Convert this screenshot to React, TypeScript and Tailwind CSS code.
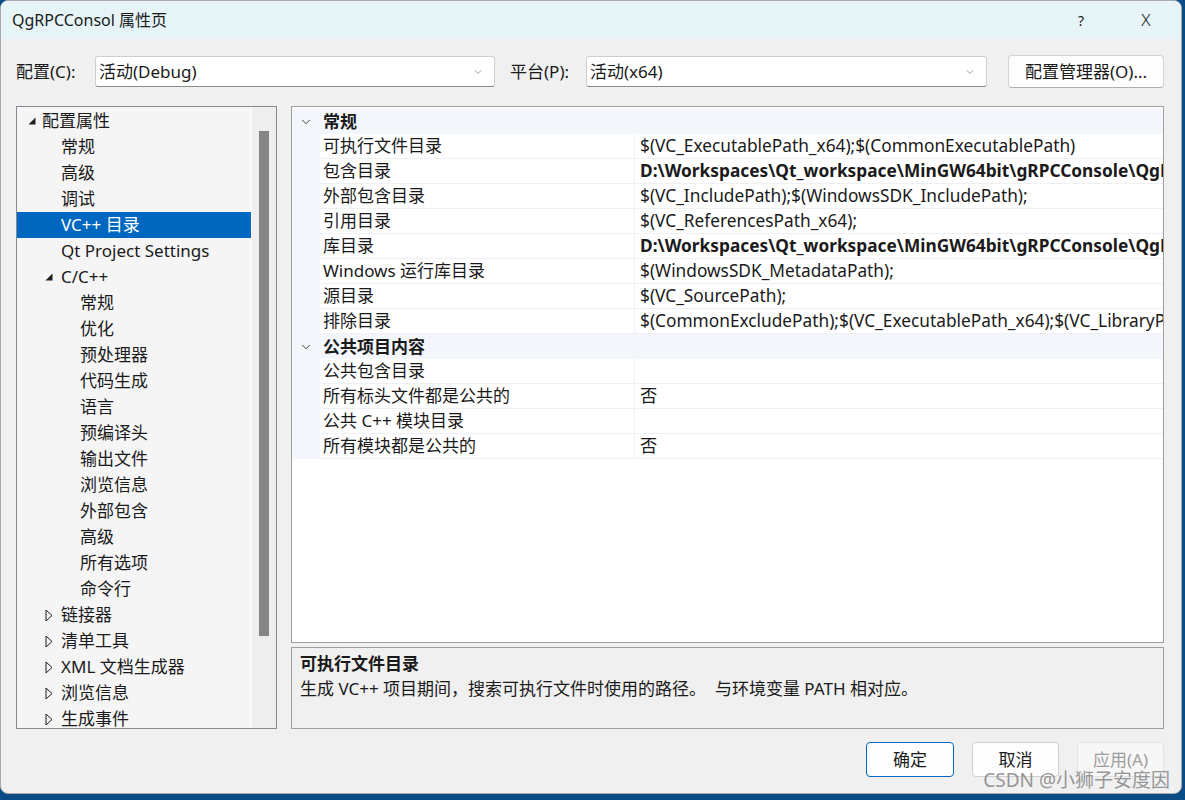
import { ChevronDown } from "lucide-react";

const FONT = { fontFamily: '"Noto Sans", "Noto Sans CJK SC", sans-serif' };

type Node = { label: string; level: number; toggle?: "open" | "closed"; selected?: boolean };

const TREE: Node[] = [
  { label: "配置属性", level: 0, toggle: "open" },
  { label: "常规", level: 1 },
  { label: "高级", level: 1 },
  { label: "调试", level: 1 },
  { label: "VC++ 目录", level: 1, selected: true },
  { label: "Qt Project Settings", level: 1 },
  { label: "C/C++", level: 1, toggle: "open" },
  { label: "常规", level: 2 },
  { label: "优化", level: 2 },
  { label: "预处理器", level: 2 },
  { label: "代码生成", level: 2 },
  { label: "语言", level: 2 },
  { label: "预编译头", level: 2 },
  { label: "输出文件", level: 2 },
  { label: "浏览信息", level: 2 },
  { label: "外部包含", level: 2 },
  { label: "高级", level: 2 },
  { label: "所有选项", level: 2 },
  { label: "命令行", level: 2 },
  { label: "链接器", level: 1, toggle: "closed" },
  { label: "清单工具", level: 1, toggle: "closed" },
  { label: "XML 文档生成器", level: 1, toggle: "closed" },
  { label: "浏览信息", level: 1, toggle: "closed" },
  { label: "生成事件", level: 1, toggle: "closed" },
];

const PATH = "D:\\Workspaces\\Qt_workspace\\MinGW64bit\\gRPCConsole\\QgRPCConsol\\include";

const GROUPS = [
  {
    title: "常规",
    rows: [
      ["可执行文件目录", "$(VC_ExecutablePath_x64);$(CommonExecutablePath)", false],
      ["包含目录", PATH, true],
      ["外部包含目录", "$(VC_IncludePath);$(WindowsSDK_IncludePath);", false],
      ["引用目录", "$(VC_ReferencesPath_x64);", false],
      ["库目录", PATH, true],
      ["Windows 运行库目录", "$(WindowsSDK_MetadataPath);", false],
      ["源目录", "$(VC_SourcePath);", false],
      ["排除目录", "$(CommonExcludePath);$(VC_ExecutablePath_x64);$(VC_LibraryPath_x64)", false],
    ] as [string, string, boolean][],
  },
  {
    title: "公共项目内容",
    rows: [
      ["公共包含目录", "", false],
      ["所有标头文件都是公共的", "否", false],
      ["公共 C++ 模块目录", "", false],
      ["所有模块都是公共的", "否", false],
    ] as [string, string, boolean][],
  },
];

function Toggle({ kind }: { kind: "open" | "closed" }) {
  if (kind === "open") {
    return (
      <svg width="8" height="8" viewBox="0 0 8 8">
        <path d="M7.5 0.5 L7.5 7.5 L0.5 7.5 Z" fill="#1f1f1f" />
      </svg>
    );
  }
  return (
    <svg width="8" height="13" viewBox="0 0 8 13">
      <path d="M1 1 L7 6.5 L1 12 Z" fill="none" stroke="#1f1f1f" strokeWidth="1" />
    </svg>
  );
}

function Select({ value, width }: { value: string; width: string }) {
  return (
    <div
      className={`flex h-[31px] items-center justify-between rounded-[3px] border border-[#cfcfcf] border-b-[#8a8a8a] bg-white pl-[3px] pr-[10px] text-[17px] text-[#1a1a1a] ${width}`}
    >
      <span>{value}</span>
      <ChevronDown className="h-3 w-3 text-[#555]" strokeWidth={1.2} />
    </div>
  );
}

export default function App() {
  return (
    <div className="h-[800px] w-[1185px] overflow-hidden bg-[#0b4c86]" style={FONT}>
      <div className="mr-[3px] flex h-[794px] flex-col overflow-hidden rounded-[8px] border border-[#a9a9a9] bg-[#f0f0f0] text-[#1a1a1a]">
        {/* Title bar */}
        <div className="flex h-[38px] shrink-0 items-center justify-between bg-[#e6f4f8] pl-[11px]">
          <span className="text-[16px] text-[#1a1a1a]">QgRPCConsol 属性页</span>
          <div className="flex items-center">
            <span className="w-[60px] text-center text-[14px]">?</span>
            <span className="w-[70px] text-center text-[17px] font-light">X</span>
          </div>
        </div>

        {/* Config row */}
        <div className="mt-[16px] flex h-[33px] items-center pl-[15px] pr-[17px] text-[17px]">
          <span className="w-[79px]">配置(C):</span>
          <Select value="活动(Debug)" width="w-[400px]" />
          <span className="ml-[15px] w-[76px]">平台(P):</span>
          <Select value="活动(x64)" width="w-[401px]" />
          <div className="ml-auto flex h-[33px] w-[156px] items-center justify-center rounded-[4px] border border-[#d2d2d2] border-b-[#b0b0b0] bg-[#fdfdfd] text-[17px]">
            配置管理器(O)...
          </div>
        </div>

        {/* Main */}
        <div className="mt-[18px] flex gap-[14px] pl-[15px] pr-[17px]">
          {/* Tree */}
          <div className="flex h-[623px] w-[261px] shrink-0 overflow-hidden border border-[#848a94] bg-[#f5f5f5]">
            <div className="flex-1 border-r border-[#ffffff] pt-[1px]">
              {TREE.map((n, i) => (
                <div
                  key={i}
                  className={`flex h-[26px] items-center text-[17px] ${
                    n.selected ? "bg-[#0067c0] text-white" : "text-[#1a1a1a]"
                  }`}
                  style={{ paddingLeft: n.level === 0 ? 11 : n.level === 1 ? 28 : 63 }}
                >
                  {n.level === 0 && (
                    <span className="mr-[6px] flex w-[8px] items-center">
                      {n.toggle && <Toggle kind={n.toggle} />}
                    </span>
                  )}
                  {n.level === 1 && (
                    <span className="mr-[8px] flex w-[8px] items-center">
                      {n.toggle && <Toggle kind={n.toggle} />}
                    </span>
                  )}
                  <span>{n.label}</span>
                </div>
              ))}
            </div>
            <div className="w-[24px] bg-[#eeeeee] pl-[7px] pt-[24px]">
              <div className="h-[505px] w-[10px] bg-[#858585]" />
            </div>
          </div>

          {/* Right column */}
          <div className="flex min-w-0 flex-1 flex-col">
            <div className="h-[537px] overflow-hidden border border-[#a0a0a0] bg-white pt-[2px]">
              {GROUPS.map((g) => (
                <div key={g.title}>
                  <div className="flex h-[25px] items-center bg-[#f3f6fb]">
                    <span className="flex w-[28px] justify-center">
                      <ChevronDown className="h-[14px] w-[14px] text-[#333]" strokeWidth={1.6} />
                    </span>
                    <span className="pl-[3px] text-[17px] font-bold">{g.title}</span>
                  </div>
                  {g.rows.map(([name, value, bold]) => (
                    <div key={name} className="flex h-[25px] bg-[#f3f6fb]">
                      <div className="w-[28px] shrink-0" />
                      <div className="flex w-[315px] shrink-0 items-center border-b border-r border-[#eef0f3] bg-white pl-[3px] text-[17px]">
                        {name}
                      </div>
                      <div
                        className={`flex min-w-0 flex-1 items-center overflow-hidden whitespace-nowrap border-b border-[#eef0f3] bg-white pl-[5px] text-[17.3px] ${
                          bold ? "font-bold" : ""
                        }`}
                      >
                        {value}
                      </div>
                    </div>
                  ))}
                </div>
              ))}
            </div>

            <div className="mt-[4px] h-[82px] border border-[#a0a0a0] bg-[#f0f0f0] px-[8px] pt-[4px]">
              <div className="text-[17px] font-bold leading-[23px]">可执行文件目录</div>
              <div className="mt-[2px] text-[17px] leading-[23px]">
                生成 VC++ 项目期间，搜索可执行文件时使用的路径。&nbsp;&nbsp;与环境变量 PATH 相对应。
              </div>
            </div>
          </div>
        </div>

        {/* Buttons */}
        <div className="relative mt-[13px] flex justify-end gap-[18px] pr-[17px]">
          <div className="flex h-[35px] w-[88px] items-center justify-center rounded-[4px] border-[1.5px] border-[#0067c0] bg-[#fdfdfd] text-[17px]">
            确定
          </div>
          <div className="flex h-[35px] w-[87px] items-center justify-center rounded-[4px] border border-[#d0d0d0] bg-[#fdfdfd] text-[17px]">
            取消
          </div>
          <div className="flex h-[35px] w-[87px] items-center justify-center rounded-[4px] border border-[#e3e3e3] bg-[#f7f7f7] text-[17px] text-[#9d9d9d]">
            应用(A)
          </div>
          <span className="absolute right-[11px] top-[24px] text-[19px] text-[#8a8a8a]/90">
            CSDN @小狮子安度因
          </span>
        </div>
      </div>
    </div>
  );
}
